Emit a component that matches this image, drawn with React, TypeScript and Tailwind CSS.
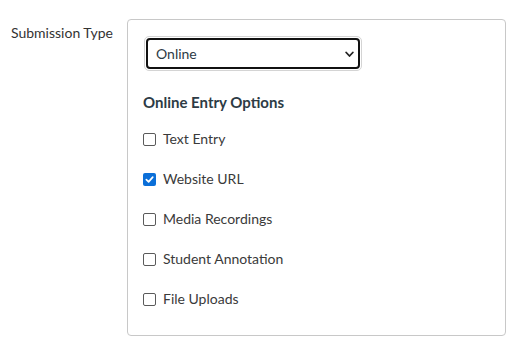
import { useState } from "react";

const options = [
  { label: "Text Entry", checked: false },
  { label: "Website URL", checked: true },
  { label: "Media Recordings", checked: false },
  { label: "Student Annotation", checked: false },
  { label: "File Uploads", checked: false },
];

function Box({ checked }: { checked: boolean }) {
  if (checked) {
    return (
      <span className="w-[13px] h-[13px] rounded-[2px] bg-[#0b6fd8] flex items-center justify-center shrink-0">
        <svg width="9" height="9" viewBox="0 0 10 10" fill="none">
          <path d="M1.5 5.2 4 7.6 8.6 2.4" stroke="white" strokeWidth="1.9" strokeLinecap="round" strokeLinejoin="round" />
        </svg>
      </span>
    );
  }
  return <span className="w-[13px] h-[13px] rounded-[2px] border border-[#5a5a5a] bg-white shrink-0" />;
}

export default function App() {
  const [items] = useState(options);
  return (
    <div className="w-[522px] h-[352px] bg-white flex font-['Lato','Noto_Sans',sans-serif] text-[#2d3b45]">
      <div className="w-[127px] pl-[11px] pt-[24px] text-[14px] leading-[18px] text-[#333]">Submission Type</div>
      <div className="mt-[19px] w-[379px] h-[317px] border border-[#c8c8c8] rounded-[4px] pt-[16px] pl-[15px] pr-[16px]">
        <div className="relative ml-px w-[218px] h-[35px] rounded-[5px] border border-[#d4d4d4] p-px">
          <div className="h-full rounded-[4px] border-2 border-[#111] flex items-center pl-[8px] text-[14px] text-[#2d3b45]">
            Online
          </div>
          <svg className="absolute right-[7px] top-[14px]" width="9" height="7" viewBox="0 0 9 7" fill="none">
            <path d="M1.2 1.5 4.5 5 7.8 1.5" stroke="#222" strokeWidth="1.8" strokeLinecap="round" strokeLinejoin="round" />
          </svg>
        </div>
        <div className="mt-[21px] text-[15px] leading-[20px] font-bold text-[#2d3b45]">Online Entry Options</div>
        <div className="mt-[7px] flex flex-col">
          {items.map((o) => (
            <div key={o.label} className="h-[40px] flex items-center gap-[7px]">
              <Box checked={o.checked} />
              <span className="text-[14px] leading-[20px] text-[#3a3a3a]">{o.label}</span>
            </div>
          ))}
        </div>
      </div>
    </div>
  );
}
